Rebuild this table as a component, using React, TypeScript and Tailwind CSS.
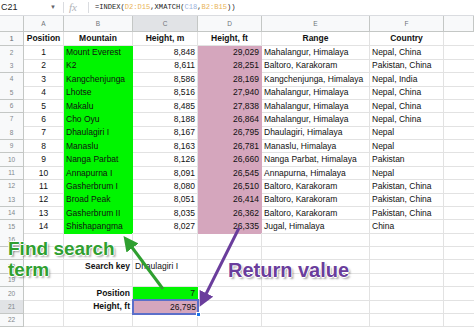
const cols = "grid grid-cols-[24px_40px_69px_65px_64px_108px_74px_1fr]";

const peaks: [number, string, string, string, string, string][] = [
  [1, "Mount Everest", "8,848", "29,029", "Mahalangur, Himalaya", "Nepal, China"],
  [2, "K2", "8,611", "28,251", "Baltoro, Karakoram", "Pakistan, China"],
  [3, "Kangchenjunga", "8,586", "28,169", "Kangchenjunga, Himalaya", "Nepal, India"],
  [4, "Lhotse", "8,516", "27,940", "Mahalangur, Himalaya", "Nepal, China"],
  [5, "Makalu", "8,485", "27,838", "Mahalangur, Himalaya", "Nepal, China"],
  [6, "Cho Oyu", "8,188", "26,864", "Mahalangur, Himalaya", "Nepal, China"],
  [7, "Dhaulagiri I", "8,167", "26,795", "Dhaulagiri, Himalaya", "Nepal"],
  [8, "Manaslu", "8,163", "26,781", "Manaslu, Himalaya", "Nepal"],
  [9, "Nanga Parbat", "8,126", "26,660", "Nanga Parbat, Himalaya", "Pakistan"],
  [10, "Annapurna I", "8,091", "26,545", "Annapurna, Himalaya", "Nepal"],
  [11, "Gasherbrum I", "8,080", "26,510", "Baltoro, Karakoram", "Pakistan, China"],
  [12, "Broad Peak", "8,051", "26,414", "Baltoro, Karakoram", "Pakistan, China"],
  [13, "Gasherbrum II", "8,035", "26,362", "Baltoro, Karakoram", "Pakistan, China"],
  [14, "Shishapangma", "8,027", "26,335", "Jugal, Himalaya", "China"],
];

function RowNum({ n, active }: { n: number; active?: boolean }) {
  return (
    <div
      className={`flex items-center justify-center border-r border-b border-[#c4c7c5] text-[6.5px] text-[#80868b] ${
        active ? "bg-[#e1e3e6]" : "bg-[#f8f9fa]"
      }`}
    >
      {n}
    </div>
  );
}

function Cell({ children, className = "" }: { children?: React.ReactNode; className?: string }) {
  return (
    <div className={`flex items-center whitespace-nowrap px-[2px] border-r border-b ${className || "border-[#e2e2e2]"}`}>
      {children}
    </div>
  );
}

const green = "bg-[#00f500] border-[#00f500]";
const pink = "bg-[#d5a6bd] border-[#d5a6bd]";

function Empty({ n }: { n: number }) {
  return (
    <div className={`${cols} h-[13.4px]`}>
      <RowNum n={n} />
      <Cell />
      <Cell />
      <Cell />
      <Cell />
      <Cell />
      <Cell />
      <Cell className="border-r-0 border-[#e2e2e2]" />
    </div>
  );
}

export default function App() {
  return (
    <div className="relative w-[474px] h-[327px] overflow-hidden bg-white font-['Liberation_Sans',Arial,sans-serif] text-[8.5px] text-[#111]">
      {/* formula bar */}
      <div className="flex h-[16px] items-center border-b border-[#dadce0]">
        <div className="flex w-[63px] items-center justify-between pl-[1px] pr-[7px] text-[9px] text-[#222]">
          <span>C21</span>
          <span className="text-[6px] text-[#5f6368]">▼</span>
        </div>
        <div className="h-[11px] w-px bg-[#dadce0]" />
        <span className="ml-[5px] w-[19px] font-['Liberation_Serif',serif] text-[11px] italic text-[#b0b3b8]">fx</span>
        <div className="h-[11px] w-px bg-[#dadce0]" />
        <span className="ml-[6px] font-['Liberation_Mono',monospace] text-[7.1px] text-[#222]">
          =INDEX(<span className="text-[#e9b458]">D2:D15</span>,XMATCH(<span className="text-[#9cb3dc]">C18</span>,
          <span className="text-[#e9b458]">B2:B15</span>))
        </span>
      </div>

      {/* column headers */}
      <div className={`${cols} h-[16px] bg-[#f8f9fa] text-[6.5px] text-[#6f7378]`}>
        <div className="border-r border-b border-[#c4c7c5]" />
        {["A", "B", "C", "D", "E", "F", ""].map((c) => (
          <div
            key={c || "g"}
            className={`flex items-center justify-center border-r border-b border-[#c4c7c5] ${c === "C" ? "bg-[#e1e3e6]" : ""}`}
          >
            {c}
          </div>
        ))}
      </div>

      {/* header row */}
      <div className={`${cols} h-[14px] font-bold`}>
        <RowNum n={1} />
        <Cell><span className="w-full text-center">Position</span></Cell>
        <Cell><span className="w-full text-center">Mountain</span></Cell>
        <Cell><span className="w-full text-center">Height, m</span></Cell>
        <Cell><span className="w-full text-center">Height, ft</span></Cell>
        <Cell><span className="w-full text-center">Range</span></Cell>
        <Cell><span className="w-full text-center">Country</span></Cell>
        <Cell className="border-r-0 border-[#e2e2e2]" />
      </div>

      {peaks.map(([pos, name, m, ft, range, country], i) => (
        <div key={name} className={`${cols} h-[13.4px]`}>
          <RowNum n={i + 2} />
          <Cell><span className="w-full text-center">{pos}</span></Cell>
          <Cell className={green}>{name}</Cell>
          <Cell><span className="w-full text-right">{m}</span></Cell>
          <Cell className={pink}><span className="w-full text-right">{ft}</span></Cell>
          <Cell>{range}</Cell>
          <Cell>{country}</Cell>
          <Cell className="border-r-0 border-[#e2e2e2]" />
        </div>
      ))}

      <Empty n={16} />
      <Empty n={17} />

      <div className={`${cols} h-[13.4px]`}>
        <RowNum n={18} />
        <Cell />
        <Cell><span className="w-full text-right font-bold">Search key</span></Cell>
        <Cell>Dhaulagiri I</Cell>
        <Cell />
        <Cell />
        <Cell />
        <Cell className="border-r-0 border-[#e2e2e2]" />
      </div>

      <Empty n={19} />

      <div className={`${cols} h-[13.4px]`}>
        <RowNum n={20} />
        <Cell />
        <Cell><span className="w-full text-right font-bold">Position</span></Cell>
        <Cell className={green}><span className="w-full text-right">7</span></Cell>
        <Cell />
        <Cell />
        <Cell />
        <Cell className="border-r-0 border-[#e2e2e2]" />
      </div>

      <div className={`${cols} h-[13.4px]`}>
        <RowNum n={21} active />
        <Cell />
        <Cell><span className="w-full text-right font-bold">Height, ft</span></Cell>
        <div className="relative flex items-center bg-[#d5a6bd] px-[2px] outline-2 outline-offset-[-1px] outline-[#5b6fc9]">
          <span className="w-full text-right">26,795</span>
          <span className="absolute -right-[3px] -bottom-[3px] h-[5px] w-[5px] border border-white bg-[#1a73e8]" />
        </div>
        <Cell />
        <Cell />
        <Cell />
        <Cell className="border-r-0 border-[#e2e2e2]" />
      </div>

      <Empty n={22} />

      {/* annotation arrows */}
      <svg className="pointer-events-none absolute inset-0" width="474" height="327">
        <defs>
          <marker id="ga" markerWidth="5" markerHeight="5" refX="2.5" refY="2.5" orient="auto" markerUnits="strokeWidth">
            <path d="M0,0 L5,2.5 L0,5 Z" fill="#2f9f30" />
          </marker>
          <marker id="pa" markerWidth="5" markerHeight="5" refX="2.5" refY="2.5" orient="auto" markerUnits="strokeWidth">
            <path d="M0,0 L5,2.5 L0,5 Z" fill="#6a3d9c" />
          </marker>
        </defs>
        <line x1="163" y1="289" x2="128" y2="242" stroke="#2f9f30" strokeWidth="3" markerEnd="url(#ga)" />
        <line x1="239" y1="228" x2="203" y2="300" stroke="#6a3d9c" strokeWidth="3" markerEnd="url(#pa)" />
      </svg>

      <div className="absolute left-[8px] top-[238px] text-[19px] leading-[21px] font-bold text-[#2f9f30] [text-shadow:1px_0_0_#fff,-1px_0_0_#fff,0_1px_0_#fff,0_-1px_0_#fff,2px_2px_2px_rgba(0,0,0,0.35)]">
        Find search
        <br />
        term
      </div>
      <div className="absolute left-[228px] top-[260px] text-[20px] leading-[20px] font-bold text-[#6a3d9c] [text-shadow:1px_0_0_#fff,-1px_0_0_#fff,0_1px_0_#fff,0_-1px_0_#fff,2px_2px_2px_rgba(0,0,0,0.35)]">
        Return value
      </div>
    </div>
  );
}
